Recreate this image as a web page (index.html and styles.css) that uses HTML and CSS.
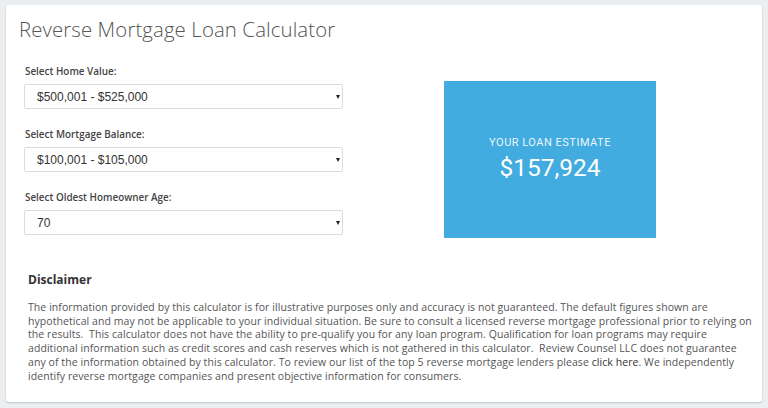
FILE: index.html
```html
<!DOCTYPE html>
<html lang="en">
<head>
<meta charset="utf-8">
<title>Reverse Mortgage Loan Calculator</title>
<link rel="stylesheet" href="styles.css">
</head>
<body>
<div class="card">
  <h1 class="title">Reverse Mortgage Loan Calculator</h1>
  <div class="calc">
    <form class="fields">
      <div class="field">
        <label class="label" for="home">Select Home Value:</label>
        <span class="select-wrap">
          <select id="home" class="select"><option>$500,001 - $525,000</option></select>
        </span>
      </div>
      <div class="field">
        <label class="label" for="balance">Select Mortgage Balance:</label>
        <span class="select-wrap">
          <select id="balance" class="select"><option>$100,001 - $105,000</option></select>
        </span>
      </div>
      <div class="field">
        <label class="label" for="age">Select Oldest Homeowner Age:</label>
        <span class="select-wrap">
          <select id="age" class="select"><option>70</option></select>
        </span>
      </div>
    </form>
    <div class="estimate">
      <div class="estimate-label">YOUR LOAN ESTIMATE</div>
      <div class="estimate-value">$157,924</div>
    </div>
  </div>
  <div class="disclaimer">
    <h2 class="disclaimer-title">Disclaimer</h2>
    <p class="disclaimer-text">The information provided by this calculator is for illustrative purposes only and accuracy is not guaranteed. The default figures shown are hypothetical and may not be applicable to your individual situation. Be sure to consult a licensed reverse mortgage professional prior to relying on the results.&nbsp; This calculator does not have the ability to pre-qualify you for any loan program. Qualification for loan programs may require additional information such as credit scores and cash reserves which is not gathered in this calculator.&nbsp; Review Counsel LLC does not guarantee any of the information obtained by this calculator. To review our list of the top 5 reverse mortgage lenders please <a class="link" href="#">click here</a>. We independently identify reverse mortgage companies and present objective information for consumers.</p>
  </div>
</div>
</body>
</html>
```
FILE: styles.css
```css
* { box-sizing: border-box; }
html, body { margin: 0; padding: 0; }
body {
  background: #eceff1;
  padding: 5px 6px 6px 6px;
  font-family: "Open Sans", "Noto Sans", sans-serif;
}
.card {
  background: #fff;
  border-radius: 3px;
  box-shadow: 0 1px 2px rgba(0,0,0,0.18);
  height: 397px;
  padding: 9px 8px 0 13px;
}
.title {
  margin: 0;
  font-family: "Open Sans", sans-serif;
  font-weight: 300;
  font-size: 20.4px;
  line-height: 30px;
  color: #555;
  letter-spacing: 0.1px;
}
.calc {
  display: flex;
  align-items: flex-start;
  margin-top: 20px;
}
.fields {
  width: 330px;
  padding-left: 5px;
  margin: 0;
}
.field { margin-bottom: 18px; }
.label {
  display: block;
  font-size: 9.9px;
  line-height: 14px;
  font-weight: 600;
  color: #444;
  margin-bottom: 6px;
  padding-left: 1px;
}
.select-wrap {
  display: block;
  position: relative;
  width: 319px;
}
.select-wrap::after {
  content: "";
  position: absolute;
  right: 3px;
  top: 11px;
  border-left: 2.5px solid transparent;
  border-right: 2.5px solid transparent;
  border-top: 4px solid #222;
  pointer-events: none;
}
.select {
  display: block;
  width: 100%;
  height: 25px;
  -webkit-appearance: none;
  appearance: none;
  background: #fff;
  border: 1px solid #dcdcdc;
  border-radius: 2px;
  padding: 0 0 0 12px;
  font-family: "Liberation Sans", Arial, sans-serif;
  font-size: 12px;
  color: #333;
}
.estimate {
  margin-left: 95px;
  margin-top: 17px;
  width: 212px;
  height: 157px;
  background: #42ace0;
  color: #fff;
  display: flex;
  flex-direction: column;
  align-items: center;
  justify-content: center;
  padding-bottom: 1px;
  font-family: Roboto, "Noto Sans", sans-serif;
}
.estimate-label {
  font-size: 11px;
  letter-spacing: 0.5px;
  line-height: 16px;
  color: rgba(255,255,255,0.92);
}
.estimate-value {
  font-size: 24.5px;
  line-height: 30px;
  margin-top: 2px;
}
.disclaimer {
  margin-top: 18px;
  padding-left: 9px;
}
.disclaimer-title {
  margin: 0;
  font-size: 12px;
  font-weight: 700;
  line-height: 18px;
  color: #333;
}
.disclaimer-text {
  margin: 12px 0 0 0;
  font-size: 10.5px;
  letter-spacing: 0.07px;
  line-height: 13.7px;
  color: #555;
  width: 727px;
}
.link { color: #333; text-decoration: none; }
```
